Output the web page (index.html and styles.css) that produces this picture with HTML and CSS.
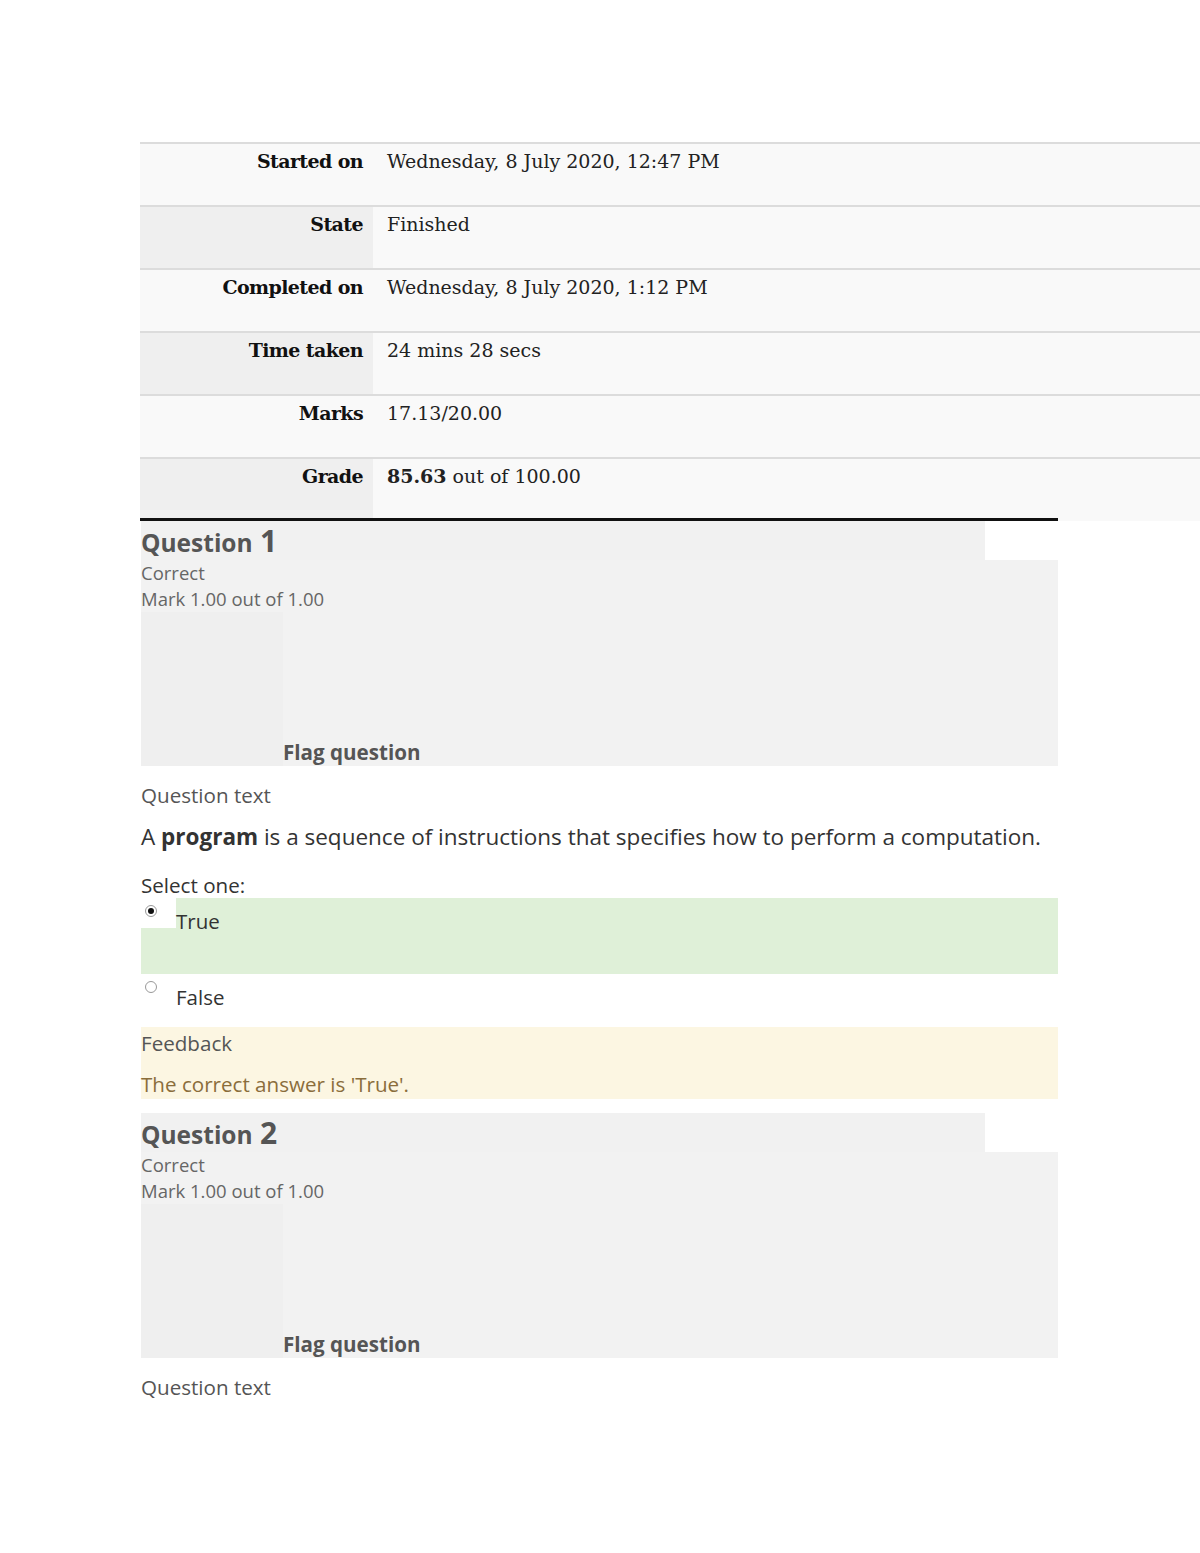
FILE: index.html
```html
<!DOCTYPE html>
<html lang="en">

<head>
    <meta charset="UTF-8">
    <meta name="viewport" content="width=device-width, initial-scale=1.0">
    <title>Quiz review</title>
    <link rel="stylesheet" href="styles.css">
</head>

<body>
    <!-- Attempt summary -->
    <table class="summary">
        <tr>
            <th>Started on</th>
            <td>Wednesday, 8 July 2020, 12:47 PM</td>
        </tr>
        <tr class="shade">
            <th>State</th>
            <td>Finished</td>
        </tr>
        <tr>
            <th>Completed on</th>
            <td>Wednesday, 8 July 2020, 1:12 PM</td>
        </tr>
        <tr class="shade">
            <th>Time taken</th>
            <td>24 mins 28 secs</td>
        </tr>
        <tr>
            <th>Marks</th>
            <td>17.13/20.00</td>
        </tr>
        <tr class="shade">
            <th>Grade</th>
            <td><b>85.63</b> out of 100.00</td>
        </tr>
    </table>
    <div class="summary-rule"></div>

    <!-- Question 1 -->
    <div class="que">
        <div class="info">
            <div class="info-head">
                <h3>Question <span class="qno">1</span></h3>
            </div>
            <div class="info-body">
                <div class="state">Correct</div>
                <div class="grade">Mark 1.00 out of 1.00</div>
                <div class="flag-area">
                    <div class="flag-gap"></div>
                    <div class="flag">Flag question</div>
                </div>
            </div>
        </div>

        <div class="content">
            <div class="qtext-label">Question text</div>
            <p class="qtext">A <b>program</b> is a sequence of instructions that specifies how to perform a computation.</p>
            <div class="prompt">Select one:</div>
            <div class="answer correct">
                <div class="radio-box"><span class="radio checked"></span></div>
                <label>True</label>
            </div>
            <div class="answer">
                <div class="radio-box"><span class="radio"></span></div>
                <label>False</label>
            </div>
            <div class="feedback">
                <div class="feedback-title">Feedback</div>
                <div class="rightanswer">The correct answer is 'True'.</div>
            </div>
        </div>
    </div>

    <!-- Question 2 -->
    <div class="que">
        <div class="info">
            <div class="info-head">
                <h3>Question <span class="qno">2</span></h3>
            </div>
            <div class="info-body">
                <div class="state">Correct</div>
                <div class="grade">Mark 1.00 out of 1.00</div>
                <div class="flag-area">
                    <div class="flag-gap"></div>
                    <div class="flag">Flag question</div>
                </div>
            </div>
        </div>

        <div class="content">
            <div class="qtext-label">Question text</div>
        </div>
    </div>
</body>

</html>
```

FILE: styles.css
```css
* {
    margin: 0;
    padding: 0;
    box-sizing: border-box;
}

body {
    background: #fff;
    font-family: 'Open Sans', 'Noto Sans', sans-serif;
    color: #333;
    padding-top: 142px;
}

/* Summary table */
.summary {
    margin-left: 140px;
    width: 1060px;
    border-collapse: collapse;
    font-family: 'DejaVu Serif', serif;
    font-size: 19px;
    color: #222;
}

.summary tr {
    border-top: 2px solid #dcdcdc;
}

.summary th,
.summary td {
    height: 63px;
    vertical-align: top;
    padding-top: 6px;
    background: #f9f9f9;
}

.summary th {
    width: 233px;
    text-align: right;
    padding-right: 10px;
    font-weight: bold;
    letter-spacing: -0.6px;
    color: #111;
}

.summary td {
    padding-left: 14px;
    font-weight: normal;
}

.summary tr.shade th {
    background: #efefef;
}

.summary-rule {
    margin-left: 140px;
    width: 918px;
    height: 3px;
    background: #111;
    margin-top: -3px;
    position: relative;
}

/* Question */
.que {
    margin-left: 141px;
    width: 917px;
    margin-bottom: 14px;
}

.info-head {
    width: 844px;
    height: 39px;
    background: #f1f1f1;
    padding-top: 5px;
}

.info-head h3 {
    font-size: 24.5px;
    font-weight: bold;
    color: #555;
    line-height: 30px;
}

.qno {
    font-size: 30px;
    font-weight: bold;
    margin-left: 1px;
}

.info-body {
    background: #f2f2f2;
    height: 206px;
    color: #666;
    font-size: 18.5px;
    line-height: 26px;
}

.flag-area {
    display: flex;
    height: 154px;
}

.flag-gap {
    width: 142px;
    background: #efefef;
}

.flag {
    align-self: flex-end;
    font-size: 20.6px;
    font-weight: bold;
    color: #555;
    line-height: 28px;
}

.content {
    padding-top: 16px;
}

.qtext-label {
    font-size: 20.6px;
    color: #555;
    line-height: 26px;
}

.qtext {
    font-size: 22.5px;
    color: #333;
    line-height: 30px;
    margin-top: 14px;
}

.prompt {
    font-size: 20.6px;
    line-height: 26px;
    margin-top: 20px;
}

.answer {
    display: flex;
    height: 53px;
    font-size: 20.5px;
}

.answer.correct {
    background: #dff0d8;
    height: 76px;
}

.radio-box {
    width: 35px;
    height: 30px;
    background: #fff;
    padding: 7px 0 0 4px;
}

.radio {
    display: block;
    width: 12px;
    height: 12px;
    border: 1px solid #999;
    border-radius: 50%;
    background: #fff;
    position: relative;
}

.radio.checked::after {
    content: '';
    position: absolute;
    left: 2px;
    top: 2px;
    width: 6px;
    height: 6px;
    border-radius: 50%;
    background: #111;
}

.answer label {
    line-height: 28px;
    padding-top: 9px;
    color: #333;
}

.feedback {
    background: #fcf6e2;
    height: 72px;
    padding-top: 2px;
}

.feedback-title {
    font-size: 20.6px;
    color: #555;
    line-height: 28px;
}

.rightanswer {
    font-size: 20.6px;
    color: #8a6d3b;
    line-height: 28px;
    margin-top: 13px;
}
```
